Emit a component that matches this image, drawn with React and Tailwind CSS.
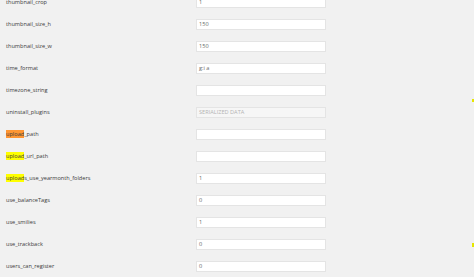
const rows = [
  { name: 'thumbnail_crop', value: '1' },
  { name: 'thumbnail_size_h', value: '150' },
  { name: 'thumbnail_size_w', value: '150' },
  { name: 'time_format', value: 'g:i a' },
  { name: 'timezone_string', value: '' },
  { name: 'uninstall_plugins', value: 'SERIALIZED DATA', disabled: true },
  { name: 'upload_path', value: '', mark: 'active', rest: '_path' },
  { name: 'upload_url_path', value: '', mark: 'yes', rest: '_url_path' },
  { name: 'uploads_use_yearmonth_folders', value: '1', mark: 'yes', rest: 's_use_yearmonth_folders' },
  { name: 'use_balanceTags', value: '0' },
  { name: 'use_smilies', value: '1' },
  { name: 'use_trackback', value: '0' },
  { name: 'users_can_register', value: '0' },
];

function Label({ row }) {
  if (!row.mark) return <span>{row.name}</span>;
  return (
    <span>
      <span className={row.mark === 'active' ? 'bg-[#ff9632]' : 'bg-[#ffff00]'}>upload</span>
      {row.rest}
    </span>
  );
}

export default function App() {
  return (
    <div className="relative h-[277px] w-[474px] overflow-hidden bg-[#f1f1f1] font-['Open_Sans',sans-serif]">
      <div className="mt-[-9px] flex flex-col">
        {rows.map((row) => (
          <div key={row.name} className="flex h-[22px] items-center">
            <div className="w-[196px] pl-[6px] pt-[2px] text-[5.6px] leading-none text-[#3a3a3a]">
              <Label row={row} />
            </div>
            <div
              className={
                'flex h-[11px] w-[130px] items-center border border-[#e4e4e4] px-[2px] pt-[1px] text-[5.6px] leading-none ' +
                (row.disabled ? 'bg-[#f6f6f6] text-[#b4b4b4]' : 'bg-white text-[#6a6a6a]')
              }
            >
              {row.value}
            </div>
          </div>
        ))}
      </div>
      <div className="absolute right-0 top-[99px] h-[3px] w-[2px] bg-[#e6e600]" />
      <div className="absolute right-0 top-[243px] h-[4px] w-[2px] bg-[#e6e600]" />
    </div>
  );
}
